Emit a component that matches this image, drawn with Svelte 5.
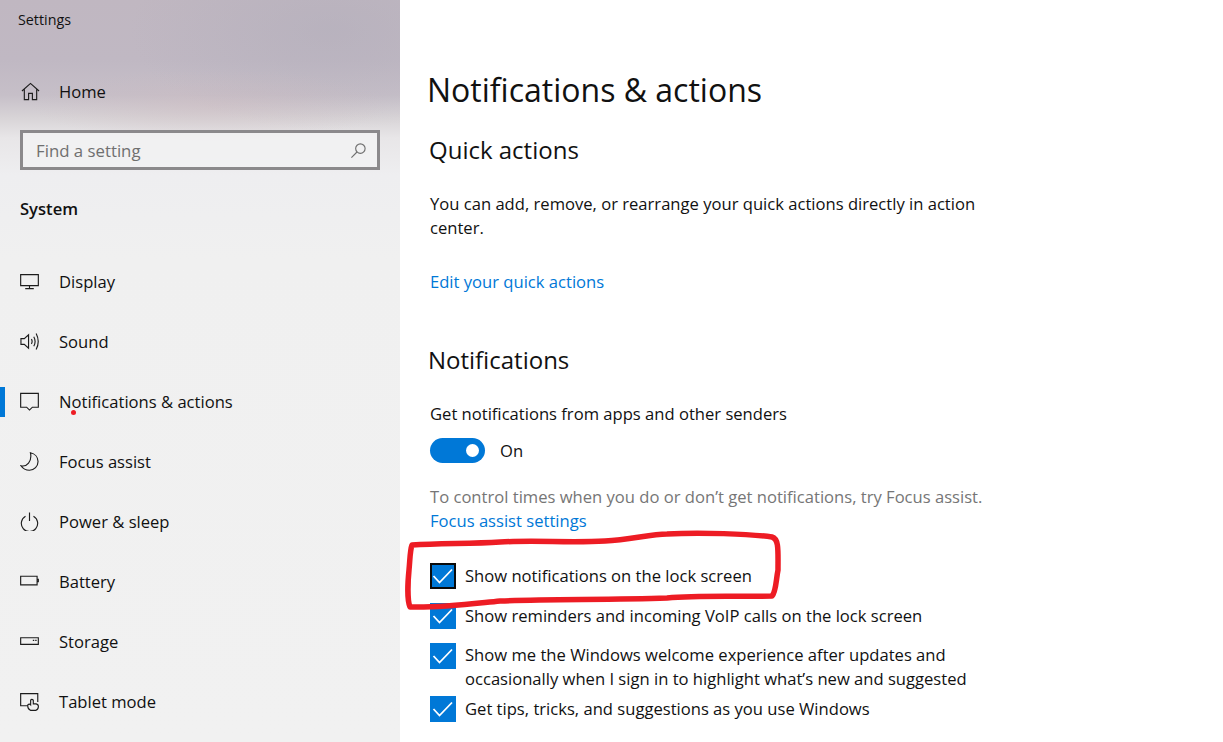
<script>
  const nav = [
    { label: 'Display', icon: 'display' },
    { label: 'Sound', icon: 'sound' },
    { label: 'Notifications & actions', icon: 'notif', active: true },
    { label: 'Focus assist', icon: 'moon' },
    { label: 'Power & sleep', icon: 'power' },
    { label: 'Battery', icon: 'battery' },
    { label: 'Storage', icon: 'storage' },
    { label: 'Tablet mode', icon: 'tablet' }
  ];
  const checks = [
    { lines: ['Show notifications on the lock screen'], cls: 'c1', focus: true },
    { lines: ['Show reminders and incoming VoIP calls on the lock screen'], cls: 'c2' },
    { lines: ['Show me the Windows welcome experience after updates and', 'occasionally when I sign in to highlight what\u2019s new and suggested'], cls: 'c3' },
    { lines: ['Get tips, tricks, and suggestions as you use Windows'], cls: 'c4' }
  ];
</script>

<div class="window">
  <aside class="side">
    <div class="title">Settings</div>
    <div class="home">
      <svg class="ic" viewBox="0 0 20 20"><path d="M1 9.500 10 1.500l9 8M3.500 8v10.500h4.500v-6.500h4v6.500h4.500V8"/></svg>
      <span>Home</span>
    </div>
    <div class="search">
      <span>Find a setting</span>
      <svg viewBox="0 0 18 18"><circle cx="11" cy="7" r="5"/><path d="M7.400 10.600 1.500 16.500"/></svg>
    </div>
    <div class="system">System</div>
    <nav>
      {#each nav as n}
        <div class="item" class:active={n.active}>
          <svg class="ic" viewBox="0 0 20 20">
            {#if n.icon === 'display'}
              <path d="M.7 2.700h18.600v11.600H.7zM10 14.300v3M5.500 17.500h9"/>
            {:else if n.icon === 'sound'}
              <path d="M1 7h3.500L9 3v14l-4.500-4H1zM12 7.500q1.500 2.500 0 5M14.500 5q2.800 5 0 10M17 1.500q4.400 8.500 0 17"/>
            {:else if n.icon === 'notif'}
              <path d="M.7 1.500h18.600v14.500h-6.300L10 19l-3-3H.7z"/>
            {:else if n.icon === 'moon'}
              <path d="M11 .8c4.500 1 8 4.500 8 9.200 0 5-4 9.200-9 9.200-3.700 0-7-1.700-9-4.700C7 16 13 10 11 .8z"/>
            {:else if n.icon === 'power'}
              <path d="M10 .5v9M5.800 4.500a8.600 8.600 0 1 0 8.400 0"/>
            {:else if n.icon === 'battery'}
              <path d="M.7 4.500h17.300v9H.7zM18 7.800h1.300v2.400H18"/>
            {:else if n.icon === 'storage'}
              <path d="M.7 6h18.600v7H.7zM13.500 8.800h1.500M16 8.800h1.500"/>
            {:else if n.icon === 'tablet'}
              <path d="M8.500 14.500H.7V1.700h18v8.800M11 19.300q-2.800-1.300-2.800-4.300v-1.500q1.500-1.500 3 0V8.500q1.200-1.500 2.800 0v4h3q2.700.5 2.300 3.500t-2.800 3.300z"/>
            {/if}
          </svg>
          <span class="lbl">{n.label}{#if n.active}<i class="dot"></i>{/if}</span>
        </div>
      {/each}
    </nav>
  </aside>

  <main class="main">
    <h1>Notifications &amp; actions</h1>
    <h2 class="q">Quick actions</h2>
    <p class="para">You can add, remove, or rearrange your quick actions directly in action<br />center.</p>
    <a class="edit">Edit your quick actions</a>
    <h2 class="n">Notifications</h2>
    <p class="get">Get notifications from apps and other senders</p>
    <div class="toggle-row">
      <span class="toggle"><i></i></span>
      <span>On</span>
    </div>
    <p class="hint">To control times when you do or don’t get notifications, try Focus assist.</p>
    <a class="focus">Focus assist settings</a>
    <div class="checks">
      {#each checks as c}
        <div class="check {c.cls}">
          <span class="box" class:focused={c.focus}>
            <svg viewBox="0 0 26 26"><path d="M3.500 13 9.500 19.500 22 6.500"/></svg>
          </span>
          <span class="ctext">{#each c.lines as l}<span>{l}</span>{/each}</span>
        </div>
      {/each}
    </div>

    <svg class="ink" viewBox="0 0 400 222">
      <path d="M12 25C40 23 70 24 100 22 135 20 170 23 205 21 230 20 250 14 267 14 300 12 350 14 372 17 379 19 378 30 378 50 376 60 376 72 372 76 340 77 300 75 267 78 210 80 150 79 100 81 70 84 40 88 10 87 7 80 8 60 9 50 10 40 10 30 12 25Z"/>
    </svg>
  </main>
</div>

<style>
  :global(body) { margin: 0; background: #fff; }
  .window {
    display: flex;
    height: 742px;
    overflow: hidden;
    font-family: "Open Sans", "Noto Sans", sans-serif;
    color: #111;
    font-size: 16.6px;
  }
  .side {
    width: 400px;
    flex: none;
    box-sizing: border-box;
    background:
      radial-gradient(ellipse 180px 36px at 210px 105px, rgba(205,185,190,.4), transparent),
      radial-gradient(ellipse 200px 100px at 330px 30px, rgba(175,172,185,.45), transparent),
      linear-gradient(180deg, #c0b7c1 0, #c0b8c3 60px, #c6bfc8 95px, #d8d4d7 118px, #e8e6e8 138px, #eeeef0 175px, #f0f0f0 260px, #f1f1f1 100%);
  }
  .title { font-size: 14.3px; line-height: 20px; padding: 10px 0 0 18px; }
  .home {
    display: flex; align-items: center; height: 40px; margin-top: 41px; padding-left: 21px;
  }
  .home span { margin-left: 19px; }
  .ic {
    width: 19px; height: 19px; flex: none; fill: none; stroke: #1c1c1c; stroke-width: 1.2;
  }
  .search {
    box-sizing: border-box;
    margin: 19px 0 0 20px;
    width: 360px;
    height: 40px;
    border: 3px solid #8b898c;
    display: flex;
    align-items: center;
    justify-content: space-between;
    padding: 0 10px 0 13px;
    background: rgba(242,242,243,.85);
    color: #6f6f6f;
    font-size: 16.8px;
  }
  .search svg { width: 17px; height: 17px; fill: none; stroke: #6f6f6f; stroke-width: 1.2; }
  .system { font-weight: 600; margin: 27px 0 0 20px; line-height: 24px; }
  nav { margin-top: 30px; }
  .item {
    display: flex; align-items: center; height: 60px; padding-left: 20px; position: relative;
  }
  .item.active::before {
    content: ""; position: absolute; left: 0; top: 16px; width: 5px; height: 30px; background: #0078d7;
  }
  .lbl { margin-left: 20px; position: relative; }
  .dot {
    position: absolute; left: 12px; top: 20px; width: 5px; height: 5px; border-radius: 50%; background: #ed1c24;
  }
  .main {
    flex: 1; position: relative; padding-left: 30px; background: #fff;
  }
  h1 { margin: 67px 0 0 -3px; font-weight: 400; font-size: 32px; line-height: 46px; color: #111; }
  h2 { margin: 0 0 0 -2px; font-weight: 400; font-size: 24px; line-height: 32px; }
  .q { margin-top: 21px; margin-left: -1px; }
  p { margin: 0; line-height: 24px; }
  .para { margin-top: 26px; }
  a { display: block; color: #0078d7; line-height: 24px; }
  .edit { margin-top: 30px; }
  .n { margin-top: 50px; }
  .get { margin-top: 26px; }
  .toggle-row { display: flex; align-items: center; gap: 15px; margin-top: 12px; height: 25px; }
  .toggle {
    display: block; width: 55px; height: 25px; border-radius: 13px; background: #0078d7; position: relative;
  }
  .toggle i {
    position: absolute; right: 6px; top: 6px; width: 13px; height: 13px; border-radius: 50%; background: #fff;
  }
  .hint { margin-top: 22px; color: #767676; }
  .checks { position: relative; }
  .check { display: flex; gap: 9px; }
  .c1 { margin-top: 30px; }
  .c2 { margin-top: 14px; }
  .c3 { margin-top: 14px; }
  .c4 { margin-top: 5px; }
  .box {
    box-sizing: border-box; width: 26px; height: 26px; flex: none; background: #0078d7; display: block;
  }
  .box.focused { outline: 2px solid #0a0a0a; outline-offset: -2px; }
  .box svg { display: block; width: 100%; height: 100%; fill: none; stroke: #fff; stroke-width: 1.8; }
  .ctext { display: flex; flex-direction: column; line-height: 24px; margin-top: 1px; }
  .c3 .ctext { margin-top: 0; }
  .ink {
    position: absolute; left: 0; top: 520px; width: 400px; height: 222px; fill: none; stroke: #ed1c24; stroke-width: 5.5; stroke-linejoin: round;
  }
</style>
